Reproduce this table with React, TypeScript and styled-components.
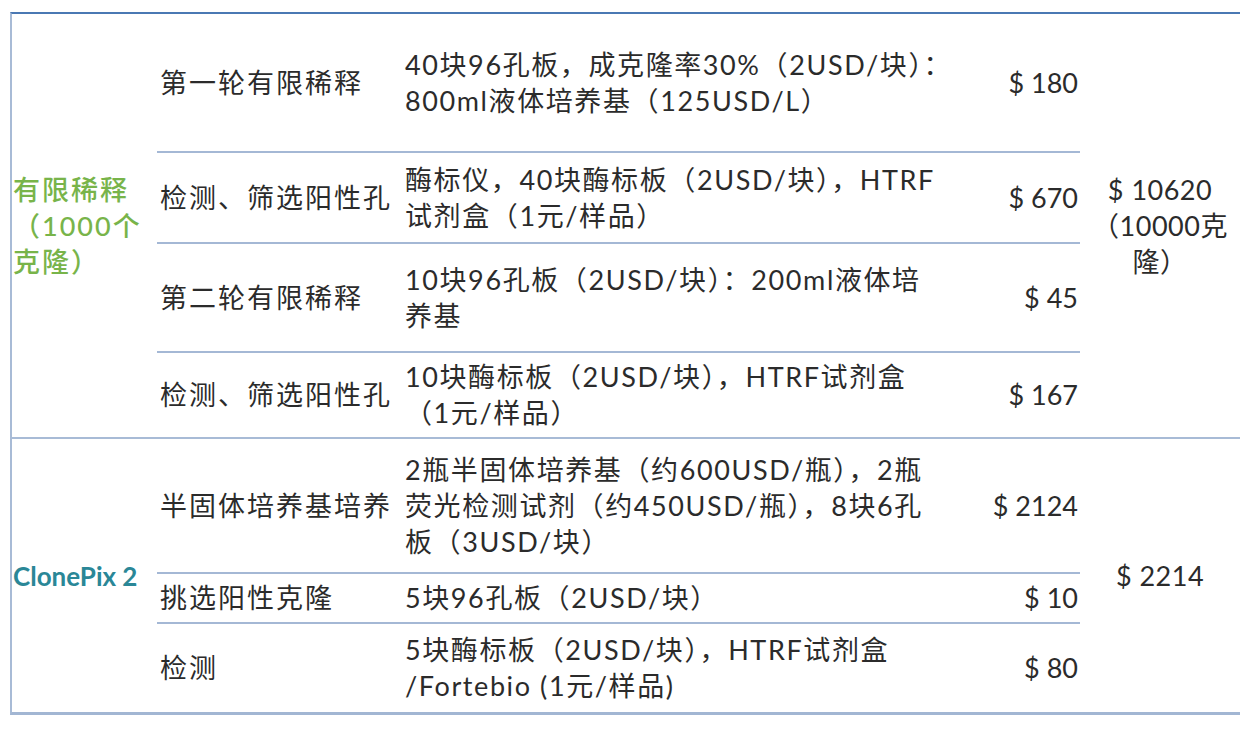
import React from 'react'
import styled, { createGlobalStyle } from 'styled-components'

const GlobalStyle = createGlobalStyle`
  body {
    margin: 0;
    background: #ffffff;
    font-family: "Lato", "Noto Sans CJK SC", sans-serif;
    color: #2b2b2b;
  }
`

type Item = { stage: string; desc: string[]; price: string; h: number }

const limited: Item[] = [
  { stage: '第一轮有限稀释', desc: ['40块96孔板，成克隆率30%（2USD/块）：', '800ml液体培养基（125USD/L）'], price: '$ 180', h: 137 },
  { stage: '检测、筛选阳性孔', desc: ['酶标仪，40块酶标板（2USD/块），HTRF', '试剂盒（1元/样品）'], price: '$ 670', h: 91 },
  { stage: '第二轮有限稀释', desc: ['10块96孔板（2USD/块）：200ml液体培', '养基'], price: '$ 45', h: 109 },
  { stage: '检测、筛选阳性孔', desc: ['10块酶标板（2USD/块），HTRF试剂盒', '（1元/样品）'], price: '$ 167', h: 86 },
]

const clonepix: Item[] = [
  { stage: '半固体培养基培养', desc: ['2瓶半固体培养基（约600USD/瓶），2瓶', '荧光检测试剂（约450USD/瓶），8块6孔', '板（3USD/块）'], price: '$ 2124', h: 133 },
  { stage: '挑选阳性克隆', desc: ['5块96孔板（2USD/块）'], price: '$ 10', h: 50 },
  { stage: '检测', desc: ['5块酶标板（2USD/块），HTRF试剂盒', '/Fortebio (1元/样品)'], price: '$ 80', h: 90 },
]

function Rows({ items }: { items: Item[] }) {
  return (
    <SubRows>
      {items.map((it, i) => (
        <SubRow key={i} $h={it.h}>
          <Stage>{it.stage}</Stage>
          <Desc>
            {it.desc.map((l, j) => (
              <div key={j}>{l}</div>
            ))}
          </Desc>
          <Price>{it.price}</Price>
        </SubRow>
      ))}
    </SubRows>
  )
}

export default function App() {
  return (
    <>
      <GlobalStyle />
      <Table>
        <Group>
          <Label $color="#78b44a">
            <div>有限稀释</div>
            <div>（1000个</div>
            <div>克隆）</div>
          </Label>
          <Rows items={limited} />
          <Total>
            <div>$ 10620</div>
            <div>（10000克</div>
            <div>隆）</div>
          </Total>
        </Group>
        <Group $divided>
          <Label $color="#2a8797" $bold>
            <div>ClonePix 2</div>
          </Label>
          <Rows items={clonepix} />
          <Total>
            <div>$ 2214</div>
          </Total>
        </Group>
      </Table>
    </>
  )
}

const Table = styled.div`
  margin: 12px 0 0 10px;
  width: 1228px;
  border-top: 2px solid #4a78b3;
  border-left: 2px solid #a8bbd6;
  border-bottom: 3px solid #a2b6d3;
  font-size: 27px;
  line-height: 36px;
  letter-spacing: 1.6px;
`

const Group = styled.div<{ $divided?: boolean }>`
  display: grid;
  grid-template-columns: 145px 923px 1fr;
  border-top: ${p => (p.$divided ? '2px solid #a8bbd6' : 'none')};
`

const Label = styled.div<{ $color: string; $bold?: boolean }>`
  display: flex;
  flex-direction: column;
  justify-content: center;
  padding-left: 1px;
  color: ${p => p.$color};
  font-weight: ${p => (p.$bold ? 700 : 500)};
  font-size: ${p => (p.$bold ? '26px' : '27px')};
  letter-spacing: ${p => (p.$bold ? '0' : '2px')};
`

const SubRows = styled.div`
  display: flex;
  flex-direction: column;
`

const SubRow = styled.div<{ $h: number }>`
  box-sizing: border-box;
  height: ${p => p.$h}px;
  display: grid;
  grid-template-columns: 248px 540px 1fr;
  align-items: center;
  & + & {
    border-top: 2px solid #a4b8d5;
  }
`

const Stage = styled.div`
  padding-left: 3px;
  white-space: nowrap;
  letter-spacing: 2px;
`

const Desc = styled.div`
  white-space: nowrap;
`

const Price = styled.div`
  text-align: right;
  padding-right: 2px;
  white-space: nowrap;
  letter-spacing: 0;
`

const Total = styled.div`
  display: flex;
  flex-direction: column;
  justify-content: center;
  align-items: center;
  text-align: center;
  letter-spacing: 0.5px;
`
